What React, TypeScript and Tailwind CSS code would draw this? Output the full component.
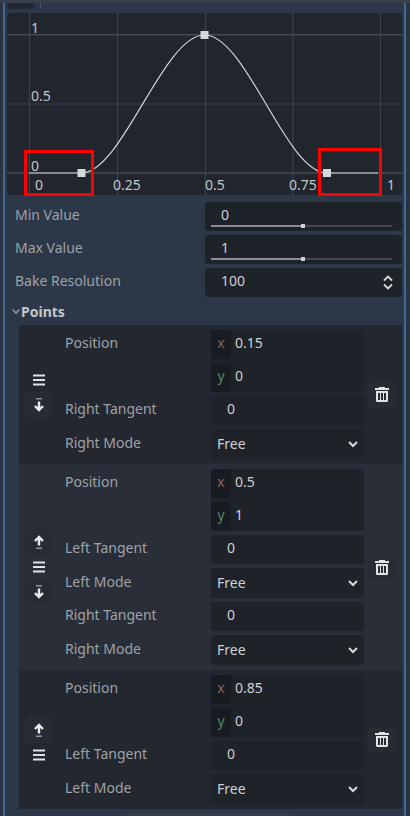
const FONT = "font-['Noto_Sans',sans-serif]";

function MenuIcon() {
  return (
    <svg width="12" height="16" viewBox="0 0 12 16" className="block">
      <path d="M0 2.500h12v2H0zM0 7h12v2H0zM0 11.500h12v2H0z" fill="#e0e0e0" />
    </svg>
  );
}

function ArrowIcon({ up }: { up?: boolean }) {
  return (
    <svg width="12" height="16" viewBox="0 0 12 16" className={up ? 'block rotate-180' : 'block'}>
      <path d="M3 1h6v1.500H3z" fill="#8f9196" />
      <path d="M6 4.500v9M2 9l4 4 4-4" fill="none" stroke="#ebebeb" strokeWidth="2.400" />
    </svg>
  );
}

function TrashIcon() {
  return (
    <svg width="14" height="15" viewBox="0 0 14 15" className="block">
      <path
        d="M4 0h6v1h4v2H0V1h4zM1 4h12v9.500a1.500 1.500 0 0 1-1.500 1.500h-9A1.500 1.500 0 0 1 1 13.500zM3 6v7h2V6zM6 6v7h2V6zM9 6v7h2V6z"
        fill="#e4e4e4"
        fillRule="evenodd"
      />
    </svg>
  );
}

function SmallButton({ children }: { children: React.ReactNode }) {
  return (
    <div className="flex h-[26px] w-[28px] items-center justify-center rounded-[3px] bg-[#262b34]">
      {children}
    </div>
  );
}

function ValueBox({ value }: { value: string }) {
  return (
    <div className="flex h-[29px] items-center rounded-[3px] bg-[#1e2229] pb-[4px] pl-[16px] text-[#cfd1d4]">
      {value}
    </div>
  );
}

function VectorRow({ axis, value }: { axis: 'x' | 'y'; value: string }) {
  return (
    <div className="flex h-[29px]">
      <div
        className={`flex w-[20px] items-center justify-center rounded-[3px] bg-[#181b21] pb-[4px] ${
          axis === 'x' ? 'text-[#8a6458]' : 'text-[#4f8a62]'
        }`}
      >
        {axis}
      </div>
      <div className="flex items-center pb-[4px] pl-[4px] text-[#cfd1d4]">{value}</div>
    </div>
  );
}

function SelectBox({ value }: { value: string }) {
  return (
    <div className="flex h-[30px] items-center justify-between rounded-[3px] bg-[#1e2229] pl-[6px] pr-[6px] text-[#cfd1d4]">
      <span className="pb-[2px]">{value}</span>
      <svg width="10" height="7" viewBox="0 0 10 7" className="block">
        <path d="M1 1l4 4 4-4" fill="none" stroke="#d8d9db" strokeWidth="2" />
      </svg>
    </div>
  );
}

function TangentRow({ label }: { label: string }) {
  return (
    <div className="flex">
      <div className="flex h-[29px] w-[146px] items-center pb-[4px] text-[#9fa2a7]">{label}</div>
      <div className="w-[153px]">
        <ValueBox value="0" />
      </div>
    </div>
  );
}

function ModeRow({ label }: { label: string }) {
  return (
    <div className="flex">
      <div className="flex h-[30px] w-[146px] items-center pb-[3px] text-[#9fa2a7]">{label}</div>
      <div className="w-[153px]">
        <SelectBox value="Free" />
      </div>
    </div>
  );
}

interface PointProps {
  x: string;
  y: string;
  left?: boolean;
  right?: boolean;
  alt?: boolean;
}

function PointPanel({ x, y, left, right, alt }: PointProps) {
  return (
    <div className={`flex items-center px-[6px] py-[5px] ${alt ? 'bg-[#292e38]' : 'bg-[#23272f]'}`}>
      <div className="flex w-[28px] flex-col items-center gap-[4px]">
        {left && (
          <SmallButton>
            <ArrowIcon up />
          </SmallButton>
        )}
        <MenuIcon />
        {right && (
          <SmallButton>
            <ArrowIcon />
          </SmallButton>
        )}
      </div>
      <div className="ml-[12px] flex w-[299px] flex-col gap-[4px]">
        <div className="flex">
          <div className="flex h-[29px] w-[146px] items-center pb-[4px] text-[#9fa2a7]">Position</div>
          <div className="flex w-[153px] flex-col gap-[4px] rounded-[3px] bg-[#1e2229]">
            <VectorRow axis="x" value={x} />
            <VectorRow axis="y" value={y} />
          </div>
        </div>
        {left && (
          <>
            <TangentRow label="Left Tangent" />
            <ModeRow label="Left Mode" />
          </>
        )}
        {right && (
          <>
            <TangentRow label="Right Tangent" />
            <ModeRow label="Right Mode" />
          </>
        )}
      </div>
      <div className="ml-[4px]">
        <SmallButton>
          <TrashIcon />
        </SmallButton>
      </div>
    </div>
  );
}

function CurveGraph() {
  return (
    <svg width="395" height="182" viewBox="7 13 395 182" className="block overflow-visible rounded-[3px] bg-[#21252d]">
      <g stroke="#3c4048" strokeWidth="1.200">
        <path d="M29.500 13v182M117.500 13v182M205.500 13v182M293 13v182M380.500 13v182" />
        <path d="M7 104h395" />
      </g>
      <path d="M7 34.800h395M7 173h395" stroke="#474a52" strokeWidth="1.500" />
      <g fill="#c4c6c9" fontFamily="'Noto Sans', sans-serif" fontSize="14">
        <text x="31" y="33">1</text>
        <text x="31" y="101">0.5</text>
        <text x="31" y="171">0</text>
        <text x="35" y="190">0</text>
        <text x="113" y="190">0.25</text>
        <text x="205" y="190">0.5</text>
        <text x="289" y="190">0.75</text>
        <text x="387" y="190">1</text>
      </g>
      <path
        d="M29 173H81.500C122 173 163 35 204.500 35C246 35 286 173 327 173H378"
        fill="none"
        stroke="#d4d5d7"
        strokeWidth="1.200"
      />
      <path d="M77.500 169h8v8h-8zM200.500 31h8v8h-8zM323 169h8v8h-8z" fill="#d6d7d9" />
      <g fill="none" stroke="#ff0000" strokeWidth="3">
        <rect x="25.500" y="151.500" width="67" height="43" />
        <rect x="319.500" y="149.500" width="61" height="45" />
      </g>
    </svg>
  );
}

function SliderField({ label, value }: { label: string; value: string }) {
  return (
    <div className="flex h-[29px]">
      <div className="w-[198px] pl-[8px] leading-[26px] text-[#9fa2a7]">{label}</div>
      <div className="relative flex-1 rounded-[3px] bg-[#1e2229] pl-[16px] leading-[26px] text-[#cfd1d4]">
        {value}
        <div className="absolute bottom-[4px] left-[6px] h-[2px] w-[181px] bg-[#45484e]" />
        <div className="absolute bottom-[4px] left-[6px] h-[2px] w-[92px] bg-[#8b8d91]" />
        <div className="absolute bottom-[3px] left-[96px] h-[4px] w-[4px] bg-[#d0d1d3]" />
      </div>
    </div>
  );
}

export default function App() {
  return (
    <div className={`${FONT} h-[816px] w-[410px] overflow-hidden bg-[#29333f] text-[14px]`}>
      <div className="h-[3px] bg-[#373e4c]" />
      <div className="ml-[3px] h-[813px] w-[403px] border-x-2 border-[#3f6a96] bg-[#2c3848] pl-[2px] pr-[2px]">
        <div className="flex h-[10px] items-start">
          <div className="h-[6px] w-[28px] rounded-b-[3px] bg-[#232830]" />
          <div className="ml-[5px] h-[6px] w-px bg-[#4a5564]" />
        </div>
        <CurveGraph />
        <div className="mt-[7px] flex flex-col gap-[4px]">
          <SliderField label="Min Value" value="0" />
          <SliderField label="Max Value" value="1" />
          <div className="flex h-[29px] items-center">
            <div className="w-[198px] pb-[4px] pl-[8px] text-[#9fa2a7]">Bake Resolution</div>
            <div className="flex h-full flex-1 items-center justify-between rounded-[3px] bg-[#1e2229] pl-[16px] pr-[9px] text-[#cfd1d4]">
              <span className="pb-[4px]">100</span>
              <svg width="10" height="15" viewBox="0 0 10 15" className="block">
                <path d="M1 5.500l4-4 4 4M1 9.500l4 4 4-4" fill="none" stroke="#d8d9db" strokeWidth="1.800" />
              </svg>
            </div>
          </div>
        </div>
        <div className="flex h-[28px] items-center">
          <svg width="10" height="7" viewBox="0 0 10 7" className="ml-[4px] block">
            <path d="M1.500 1.500L5 5l3.500-3.500" fill="none" stroke="#8f949b" strokeWidth="1.600" />
          </svg>
          <span className="font-bold text-[#c4c7cb]">Points</span>
        </div>
        <div className="ml-[12px] w-[383px]">
          <PointPanel x="0.15" y="0" right />
          <PointPanel x="0.5" y="1" left right alt />
          <PointPanel x="0.85" y="0" left />
        </div>
        <div className="mx-auto mt-[4px] h-[8px] w-[170px] rounded-t-[3px] bg-[#343a46]" />
      </div>
    </div>
  );
}
